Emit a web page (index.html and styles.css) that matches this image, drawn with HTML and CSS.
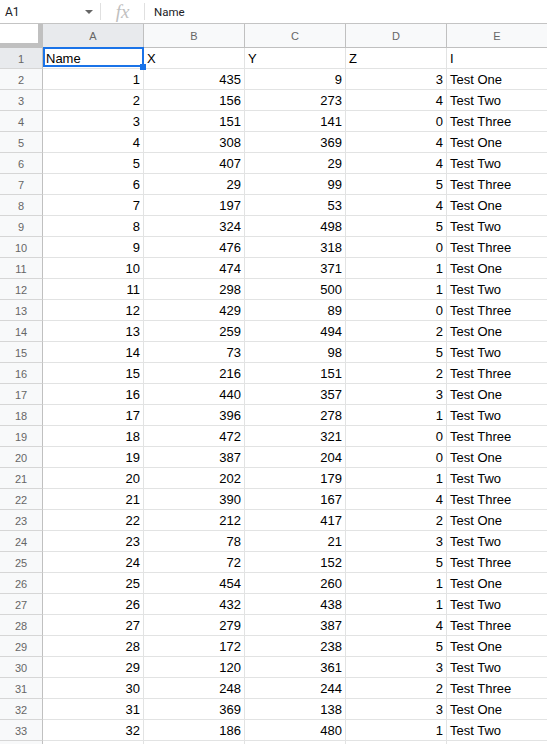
FILE: index.html
```html
<!DOCTYPE html>
<html lang="en">
<head>
    <meta charset="UTF-8">
    <meta name="viewport" content="width=device-width, initial-scale=1.0">
    <title>Sheet</title>
    <link rel="stylesheet" href="styles.css">
</head>
<body>
    <div class="formula-bar">
        <div class="name-box">
            <span>A1</span>
            <span class="caret"></span>
        </div>
        <div class="divider"></div>
        <div class="fx">fx</div>
        <div class="divider"></div>
        <div class="formula">Name</div>
    </div>

    <div class="sheet" id="sheet">
        <div class="corner"></div>
        <div class="col-head selected">A</div>
        <div class="col-head">B</div>
        <div class="col-head">C</div>
        <div class="col-head">D</div>
        <div class="col-head">E</div>
        <!-- rows are added by the script below -->
    </div>

    <script>
        const rows = [
            ['Name', 'X', 'Y', 'Z', 'I'],
            [1, 435, 9, 3, 'Test One'],
            [2, 156, 273, 4, 'Test Two'],
            [3, 151, 141, 0, 'Test Three'],
            [4, 308, 369, 4, 'Test One'],
            [5, 407, 29, 4, 'Test Two'],
            [6, 29, 99, 5, 'Test Three'],
            [7, 197, 53, 4, 'Test One'],
            [8, 324, 498, 5, 'Test Two'],
            [9, 476, 318, 0, 'Test Three'],
            [10, 474, 371, 1, 'Test One'],
            [11, 298, 500, 1, 'Test Two'],
            [12, 429, 89, 0, 'Test Three'],
            [13, 259, 494, 2, 'Test One'],
            [14, 73, 98, 5, 'Test Two'],
            [15, 216, 151, 2, 'Test Three'],
            [16, 440, 357, 3, 'Test One'],
            [17, 396, 278, 1, 'Test Two'],
            [18, 472, 321, 0, 'Test Three'],
            [19, 387, 204, 0, 'Test One'],
            [20, 202, 179, 1, 'Test Two'],
            [21, 390, 167, 4, 'Test Three'],
            [22, 212, 417, 2, 'Test One'],
            [23, 78, 21, 3, 'Test Two'],
            [24, 72, 152, 5, 'Test Three'],
            [25, 454, 260, 1, 'Test One'],
            [26, 432, 438, 1, 'Test Two'],
            [27, 279, 387, 4, 'Test Three'],
            [28, 172, 238, 5, 'Test One'],
            [29, 120, 361, 3, 'Test Two'],
            [30, 248, 244, 2, 'Test Three'],
            [31, 369, 138, 3, 'Test One'],
            [32, 186, 480, 1, 'Test Two'],
            ['', '', '', '', '']
        ];

        const sheet = document.getElementById('sheet');

        rows.forEach((row, i) => {
            const head = document.createElement('div');
            head.className = 'row-head' + (i === 0 ? ' selected' : '');
            head.textContent = i + 1;
            sheet.appendChild(head);

            row.forEach((value, j) => {
                const cell = document.createElement('div');
                cell.className = 'cell' + (typeof value === 'number' ? ' num' : '');
                cell.textContent = value;

                // A1 is the active cell
                if (i === 0 && j === 0) {
                    cell.classList.add('active');
                    cell.innerHTML += '<span class="sel"></span><span class="handle"></span>';
                }
                sheet.appendChild(cell);
            });
        });
    </script>
</body>
</html>
```

FILE: styles.css
```css
body {
    margin: 0;
    height: 744px;
    overflow: hidden;
    background-color: #fff;
    font-family: "Liberation Sans", Arial, sans-serif;
    color: #000;
}
.formula-bar {
    display: flex;
    align-items: center;
    height: 23px;
    border-bottom: 1px solid #c4c4c4;
    font-family: Roboto, "Liberation Sans", sans-serif;
}
.name-box {
    width: 100px;
    box-sizing: border-box;
    display: flex;
    align-items: center;
    justify-content: space-between;
    padding: 0 7px 0 5px;
    font-size: 12px;
    color: #202124;
}
.caret {
    width: 0;
    height: 0;
    border-left: 4px solid transparent;
    border-right: 4px solid transparent;
    border-top: 4px solid #666;
}
.divider {
    width: 1px;
    height: 17px;
    background-color: #e0e0e0;
}
.fx {
    width: 43px;
    text-align: center;
    font-family: "Liberation Serif", serif;
    font-style: italic;
    font-size: 19px;
    color: #c0c0c0;
    line-height: 23px;
}
.formula {
    padding-left: 9px;
    font-size: 11.5px;
    color: #202124;
}
.sheet {
    display: grid;
    grid-template-columns: 43px repeat(5, 101px);
    grid-template-rows: 24px;
    grid-auto-rows: 21px;
    width: 548px;
}
.corner, .col-head, .row-head, .cell {
    box-sizing: border-box;
}
.corner {
    background-color: #fff;
    border-right: 1px solid #c0c0c0;
    border-bottom: 1px solid #c0c0c0;
    box-shadow: inset -4px -4px 0 #c0c0c0;
}
.col-head {
    background-color: #f8f9fa;
    border-right: 1px solid #c0c0c0;
    border-bottom: 1px solid #c0c0c0;
    font-size: 11px;
    color: #666;
    text-align: center;
    line-height: 24px;
}
.row-head {
    background-color: #f8f9fa;
    border-right: 1px solid #c0c0c0;
    border-bottom: 1px solid #d6d6d6;
    font-size: 11px;
    color: #666;
    text-align: center;
    line-height: 22px;
    overflow: hidden;
}
.col-head.selected, .row-head.selected {
    background-color: #e8eaed;
}
.cell {
    border-right: 1px solid #e2e3e3;
    border-bottom: 1px solid #e2e3e3;
    padding: 0 3px;
    font-size: 13px;
    line-height: 22px;
    white-space: nowrap;
    overflow: hidden;
}
.cell.num {
    text-align: right;
}
.cell.active {
    position: relative;
    overflow: visible;
}
.sel {
    position: absolute;
    top: -1px;
    left: 0;
    right: -1px;
    bottom: 1px;
    border: 2px solid #1a73e8;
}
.handle {
    position: absolute;
    right: -3px;
    bottom: -2px;
    width: 6px;
    height: 6px;
    background-color: #1a73e8;
}
```
